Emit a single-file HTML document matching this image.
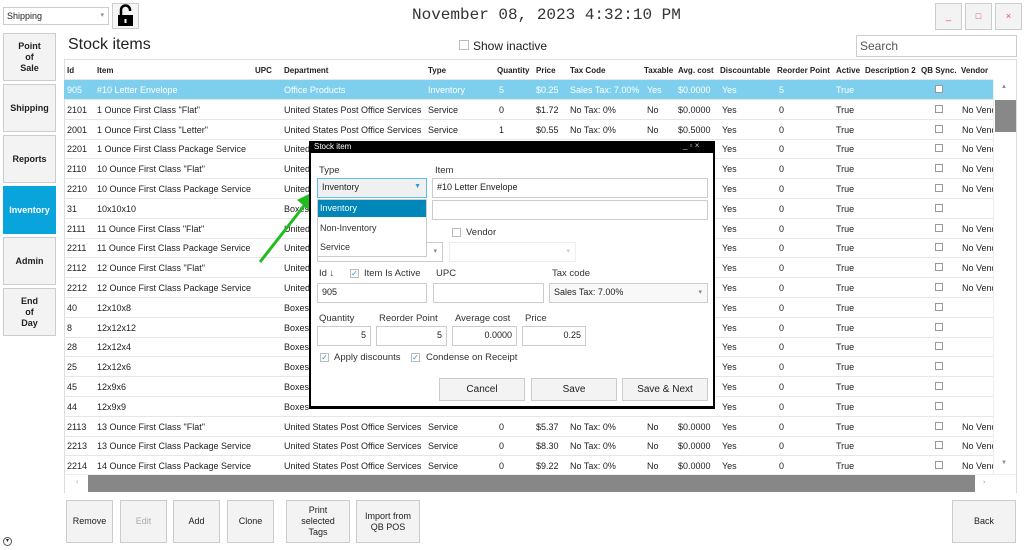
<!DOCTYPE html><html><head><style>
*{box-sizing:border-box;margin:0;padding:0}
body{width:1024px;height:550px;background:#fff;font-family:"Liberation Sans",sans-serif;font-size:9px;color:#222;position:relative;overflow:hidden}
.a{position:absolute}
.sb{position:absolute;left:3px;width:53px;height:48px;background:#f3f3f3;border:1px solid #ccc;font-weight:bold;font-size:9px;display:flex;align-items:center;justify-content:center;text-align:center;line-height:11px}
.r{position:absolute;left:64px;width:929px;height:20px;border-bottom:1px solid #e6e6e6}
.r span{position:absolute;top:5px;white-space:nowrap}
.hd span{font-weight:bold;top:6px;font-size:8px}
.cb{display:inline-block;width:8px;height:8px;border:1px solid #999;background:#fff}
.btn{position:absolute;background:#f3f3f3;border:1px solid #ccc;display:flex;align-items:center;justify-content:center;text-align:center;font-size:9px;line-height:11px}
.in{position:absolute;border:1px solid #ccc;background:#fff;font-size:9px;padding:3px 4px;height:20px}
.lb{position:absolute;font-size:9.5px;color:#333}
.ck{position:absolute;width:9px;height:9px;border:1px solid #bbb;background:#fff;color:#1a9ad6;font-size:8px;line-height:7px;text-align:center}
</style></head><body>
<div class="in" style="left:3px;top:7px;width:106px;height:18px;padding:3px">Shipping<span class="a" style="right:4px;top:3px;color:#888;font-size:7px">▾</span></div>
<div class="a" style="left:112px;top:3px;width:27px;height:26px;border:1px solid #ccc;background:#f6f6f6"><svg width="25" height="24" viewBox="0 0 25 24"><path d="M8 11V6a4.5 4.5 0 0 1 9 0v1" stroke="#000" stroke-width="2.5" fill="none"/><rect x="5" y="11" width="15" height="11" fill="#000"/><rect x="11.5" y="15" width="2" height="4" fill="#fff"/></svg></div>
<div class="a" style="left:412px;top:6px;font-family:'Liberation Mono',monospace;font-size:16px;color:#333">November 08, 2023 4:32:10 PM</div>
<div class="btn" style="left:935px;top:3px;width:27px;height:27px;color:#e44">_</div>
<div class="btn" style="left:965px;top:3px;width:27px;height:27px;color:#e44">□</div>
<div class="btn" style="left:995px;top:3px;width:27px;height:27px;color:#e44">×</div>
<div class="sb" style="top:33px">Point<br>of<br>Sale</div>
<div class="sb" style="top:84px">Shipping</div>
<div class="sb" style="top:135px">Reports</div>
<div class="sb" style="top:186px;background:#0aa4dc;color:#fff;border-color:#0aa4dc">Inventory</div>
<div class="sb" style="top:237px">Admin</div>
<div class="sb" style="top:288px">End<br>of<br>Day</div>
<div class="a" style="left:68px;top:36px;font-size:16px;color:#222">Stock items</div>
<div class="a" style="left:459px;top:39px;font-size:12px;color:#222"><span class="cb" style="width:10px;height:10px;margin-right:4px;border-color:#bbb"></span>Show inactive</div>
<div class="in" style="left:856px;top:35px;width:161px;height:22px;font-size:12px;color:#555;padding:3px 3px">Search</div>
<div class="a" style="left:64px;top:59px;width:953px;height:434px;border:1px solid #ddd"></div>
<div class="r hd" style="top:60px"><span style="left:3px">Id</span><span style="left:33px">Item</span><span style="left:191px">UPC</span><span style="left:220px">Department</span><span style="left:364px">Type</span><span style="left:433px">Quantity</span><span style="left:472px">Price</span><span style="left:506px">Tax Code</span><span style="left:580px">Taxable</span><span style="left:614px">Avg. cost</span><span style="left:656px">Discountable</span><span style="left:713px">Reorder Point</span><span style="left:772px">Active</span><span style="left:801px">Description 2</span><span style="left:857px">QB Sync.</span><span style="left:897px">Vendor</span></div>
<div id="rows"></div>
<div class="a" style="left:993px;top:80px;width:23px;height:394px;background:#fff;border-left:1px solid #eee"></div>
<div class="a" style="left:995px;top:100px;width:21px;height:32px;background:#888"></div>
<div class="a" style="left:1001px;top:84px;font-size:6px;color:#888">▲</div>
<div class="a" style="left:1001px;top:460px;font-size:6px;color:#888">▼</div>
<div class="a" style="left:65px;top:474px;width:951px;height:19px;background:#fff;border-top:1px solid #eee"></div>
<div class="a" style="left:88px;top:475px;width:887px;height:17px;background:#878787"></div>
<div class="a" style="left:76px;top:479px;font-size:7px;color:#999">‹</div>
<div class="a" style="left:983px;top:479px;font-size:7px;color:#999">›</div>
<script>
var R=[["905","#10 Letter Envelope","Office Products","Inventory","5","$0.25","Sales Tax: 7.00%","Yes","$0.0000","5",""],
["2101",'1 Ounce First Class "Flat"',"United States Post Office Services","Service","0","$1.72","No Tax: 0%","No","$0.0000","0","No Vendor"],
["2001",'1 Ounce First Class "Letter"',"United States Post Office Services","Service","1","$0.55","No Tax: 0%","No","$0.5000","0","No Vendor"],
["2201","1 Ounce First Class Package Service","United"],["2110",'10 Ounce First Class "Flat"',"United"],["2210","10 Ounce First Class Package Service","United"],["31","10x10x10","Boxes",""],["2111",'11 Ounce First Class "Flat"',"United"],["2211","11 Ounce First Class Package Service","United"],["2112",'12 Ounce First Class "Flat"',"United"],["2212","12 Ounce First Class Package Service","United"],["40","12x10x8","Boxes",""],["8","12x12x12","Boxes",""],["28","12x12x4","Boxes",""],["25","12x12x6","Boxes",""],["45","12x9x6","Boxes",""],["44","12x9x9","Boxes",""],
["2113",'13 Ounce First Class "Flat"',"United States Post Office Services","Service","0","$5.37","No Tax: 0%","No","$0.0000","0","No Vendor"],
["2213","13 Ounce First Class Package Service","United States Post Office Services","Service","0","$8.30","No Tax: 0%","No","$0.0000","0","No Vendor"],
["2214","14 Ounce First Class Package Service","United States Post Office Services","Service","0","$9.22","No Tax: 0%","No","$0.0000","0","No Vendor"]];
var h="";R.forEach(function(d,i){var t=80+i*19.8,s=i==0;var st=s?"background:#7ecfee;color:#fff;":"";
h+='<div class="r" style="top:'+t+'px;'+st+'"><span style="left:3px">'+d[0]+'</span><span style="left:33px">'+d[1]+'</span><span style="left:220px">'+d[2]+'</span>';
if(d.length>4){h+='<span style="left:364px">'+d[3]+'</span><span style="left:435px">'+d[4]+'</span><span style="left:472px">'+d[5]+'</span><span style="left:506px">'+d[6]+'</span><span style="left:583px">'+d[7]+'</span><span style="left:614px">'+d[8]+'</span><span style="left:658px">Yes</span><span style="left:715px">'+d[9]+'</span><span style="left:772px">True</span><span style="left:871px;top:5px" class="cb"></span><span style="left:898px">'+d[10]+'</span>';}
else{var v=(d.length==4)?"":"No Vendor";h+='<span style="left:658px">Yes</span><span style="left:715px">0</span><span style="left:772px">True</span><span style="left:871px;top:5px" class="cb"></span><span style="left:898px">'+v+'</span>';}
h+='</div>';});document.getElementById("rows").innerHTML=h;
</script>
<div class="btn" style="left:66px;top:500px;width:47px;height:43px">Remove</div>
<div class="btn" style="left:120px;top:500px;width:47px;height:43px;color:#aaa">Edit</div>
<div class="btn" style="left:173px;top:500px;width:47px;height:43px">Add</div>
<div class="btn" style="left:227px;top:500px;width:47px;height:43px">Clone</div>
<div class="btn" style="left:286px;top:500px;width:64px;height:43px">Print<br>selected<br>Tags</div>
<div class="btn" style="left:356px;top:500px;width:64px;height:43px">Import from<br>QB POS</div>
<div class="btn" style="left:952px;top:500px;width:64px;height:43px">Back</div>
<div class="a" style="left:3px;top:537px;width:9px;height:9px;border:1px solid #555;border-radius:50%;font-size:6px;line-height:7px;text-align:center">▾</div>
<svg class="a" style="left:255px;top:190px" width="70" height="80"><line x1="5" y1="72" x2="52" y2="12" stroke="#22bb22" stroke-width="3"/><polygon points="62,0 42,10 56,22" fill="#22bb22"/></svg>
<div class="a" style="left:309px;top:141px;width:406px;height:268px;background:#000"></div>
<div class="a" style="left:314px;top:142px;font-size:8px;color:#fff">Stock item</div>
<div class="a" style="left:683px;top:141px;font-size:8px;color:#ccc">_ ▫ ×</div>
<div class="a" style="left:311px;top:153px;width:402px;height:253px;background:#fff"></div>
<div class="lb" style="left:319px;top:165px">Type</div>
<div class="lb" style="left:435px;top:165px">Item</div>
<div class="in" style="left:317px;top:178px;width:110px;background:#f0f0f0;border-color:#5bc0e8">Inventory<span class="a" style="right:5px;top:4px;color:#2a9fd6;font-size:7px">▼</span></div>
<div class="in" style="left:432px;top:178px;width:276px">#10 Letter Envelope</div>
<div class="in" style="left:432px;top:200px;width:276px"></div>
<div class="ck" style="left:452px;top:228px"></div><div class="lb" style="left:466px;top:227px">Vendor</div>
<div class="in" style="left:317px;top:242px;width:126px"><span class="a" style="right:5px;top:4px;color:#888;font-size:7px">▾</span></div>
<div class="in" style="left:449px;top:242px;width:127px;border-color:#eee"><span class="a" style="right:5px;top:4px;color:#ccc;font-size:7px">▾</span></div>
<div class="a" style="left:317px;top:199px;width:110px;height:58px;background:#fff;border:1px solid #ccc"></div>
<div class="a" style="left:318px;top:200px;width:108px;height:17px;background:#0086b8;color:#fff;padding:3px 2px;font-size:9px">Inventory</div>
<div class="lb" style="left:320px;top:223px;font-size:9px">Non-Inventory</div>
<div class="lb" style="left:320px;top:242px;font-size:9px">Service</div>
<div class="lb" style="left:319px;top:268px">Id ↓</div>
<div class="ck" style="left:350px;top:269px">✓</div><div class="lb" style="left:364px;top:268px">Item Is Active</div>
<div class="lb" style="left:436px;top:268px">UPC</div>
<div class="lb" style="left:552px;top:268px">Tax code</div>
<div class="in" style="left:317px;top:283px;width:110px">905</div>
<div class="in" style="left:433px;top:283px;width:111px"></div>
<div class="in" style="left:549px;top:283px;width:159px;background:#f8f8f8">Sales Tax: 7.00%<span class="a" style="right:5px;top:4px;color:#888;font-size:7px">▾</span></div>
<div class="lb" style="left:319px;top:313px">Quantity</div>
<div class="lb" style="left:379px;top:313px">Reorder Point</div>
<div class="lb" style="left:455px;top:313px">Average cost</div>
<div class="lb" style="left:525px;top:313px">Price</div>
<div class="in" style="left:317px;top:326px;width:54px;text-align:right">5</div>
<div class="in" style="left:376px;top:326px;width:71px;text-align:right">5</div>
<div class="in" style="left:452px;top:326px;width:65px;text-align:right">0.0000</div>
<div class="in" style="left:522px;top:326px;width:64px;text-align:right">0.25</div>
<div class="ck" style="left:320px;top:353px">✓</div><div class="lb" style="left:334px;top:352px">Apply discounts</div>
<div class="ck" style="left:411px;top:353px">✓</div><div class="lb" style="left:426px;top:352px">Condense on Receipt</div>
<div class="btn" style="left:439px;top:378px;width:86px;height:23px;font-size:10px">Cancel</div>
<div class="btn" style="left:531px;top:378px;width:86px;height:23px;font-size:10px">Save</div>
<div class="btn" style="left:622px;top:378px;width:86px;height:23px;font-size:10px">Save &amp; Next</div>
</body></html>
